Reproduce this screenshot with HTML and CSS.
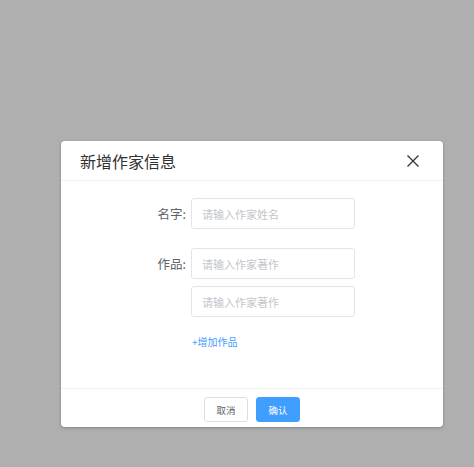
FILE: index.html
```html
<!DOCTYPE html>
<html lang="zh">
<head>
<meta charset="utf-8">
<link rel="stylesheet" href="styles.css">
</head>
<body>
<div class="overlay">
  <div class="dialog">
    <div class="dialog-header">
      <span class="dialog-title">新增作家信息</span>
      <button class="close-btn" aria-label="关闭">
        <svg width="12" height="12" viewBox="0 0 12 12"><path d="M0.5 0.5 L11.5 11.5 M11.5 0.5 L0.5 11.5" stroke="#333" stroke-width="1.3" fill="none"/></svg>
      </button>
    </div>
    <div class="dialog-body">
      <div class="form-row row-name">
        <label class="form-label">名字:</label>
        <input class="form-input" placeholder="请输入作家姓名">
      </div>
      <div class="form-row row-work">
        <label class="form-label">作品:</label>
        <input class="form-input" placeholder="请输入作家著作">
      </div>
      <div class="form-row row-work2">
        <span class="form-label"></span>
        <input class="form-input" placeholder="请输入作家著作">
      </div>
      <div class="form-row row-link">
        <span class="form-label"></span>
        <a class="add-link">+增加作品</a>
      </div>
    </div>
    <div class="dialog-footer">
      <button class="btn btn-cancel">取消</button>
      <button class="btn btn-primary">确认</button>
    </div>
  </div>
</div>
</body>
</html>
```

FILE: styles.css
```css
* { box-sizing: border-box; }
html, body { margin: 0; padding: 0; }
body {
  background: #afafaf;
  font-family: "Noto Sans CJK SC", "Noto Sans", sans-serif;
  width: 474px;
  height: 467px;
  overflow: hidden;
}
.overlay {
  padding: 141px 0 0 61px;
}
.dialog {
  width: 382px;
  height: 286px;
  background: #fff;
  border-radius: 4px;
  box-shadow: 0 1px 3px rgba(0,0,0,0.25);
  display: flex;
  flex-direction: column;
}
.dialog-header {
  height: 40px;
  border-bottom: 1px solid #efefef;
  display: flex;
  align-items: center;
  justify-content: space-between;
  padding: 0 23px 0 19px;
}
.dialog-title {
  font-size: 16px;
  color: #303133;
  line-height: 20px;
}
.close-btn {
  border: 0;
  background: none;
  padding: 0;
  width: 14px;
  height: 14px;
  display: flex;
  align-items: center;
  justify-content: center;
}
.dialog-body {
  flex: 1;
  padding: 17px 0 0 64px;
  display: flex;
  flex-direction: column;
}
.form-row {
  display: flex;
  align-items: center;
  gap: 5px;
}
.row-work { margin-top: 19px; }
.row-work2 { margin-top: 7px; }
.row-link { margin-top: 18px; }
.form-label {
  width: 61px;
  text-align: right;
  font-size: 12.5px;
  color: #606266;
}
.form-input {
  width: 164px;
  height: 31px;
  border: 1px solid #e2e4ea;
  border-radius: 3px;
  padding: 0 10px;
  font-family: inherit;
  font-size: 11px;
  color: #606266;
  outline: none;
}
.form-input::placeholder { color: #c3c6cc; }
.add-link {
  font-size: 10px;
  line-height: 14px;
  color: #409eff;
  padding-left: 1px;
}
.dialog-footer {
  height: 39px;
  border-top: 1px solid #efefef;
  display: flex;
  justify-content: center;
  gap: 8px;
  padding-top: 8px;
}
.btn {
  width: 44px;
  height: 25px;
  border-radius: 3px;
  font-family: inherit;
  font-size: 9.5px;
  padding: 0;
}
.btn-cancel {
  background: #fff;
  border: 1px solid #dcdfe6;
  color: #606266;
}
.btn-primary {
  background: #409eff;
  border: 1px solid #409eff;
  color: #fff;
}
```
